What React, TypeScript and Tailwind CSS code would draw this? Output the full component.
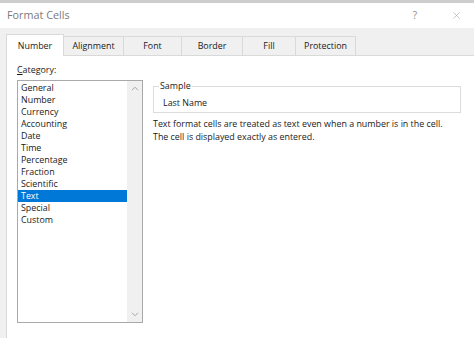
import { X } from "lucide-react";

const categories = [
  "General",
  "Number",
  "Currency",
  "Accounting",
  "Date",
  "Time",
  "Percentage",
  "Fraction",
  "Scientific",
  "Text",
  "Special",
  "Custom",
];

const tabs = [
  { label: "Number", w: "w-[58px]" },
  { label: "Alignment", w: "w-[60px]" },
  { label: "Font", w: "w-[58px]" },
  { label: "Border", w: "w-[61px]" },
  { label: "Fill", w: "w-[53px]" },
  { label: "Protection", w: "w-[60px]" },
];

const Chevron = ({ up }: { up?: boolean }) => (
  <svg width="8" height="5" viewBox="0 0 8 5" className={up ? "" : "rotate-180"}>
    <path d="M1 4.2 L4 1.2 L7 4.2" fill="none" stroke="#a6a6a6" strokeWidth="1" />
  </svg>
);

const App = () => {
  const selected = "Text";

  return (
    <div className="flex h-[338px] w-[474px] flex-col overflow-hidden bg-[#f0f0f0] font-['Open_Sans',sans-serif] text-[8.9px] text-[#1a1a1a]">
      <div className="h-[3px] shrink-0 bg-[#cdcdcd]" />

      {/* title bar */}
      <div className="flex h-[25px] shrink-0 items-center bg-white pl-[7px] pr-[12px]">
        <span className="text-[10.8px] text-[#7a7a7a]">Format Cells</span>
        <span className="ml-auto mr-[34px] text-[10px] text-[#8a8a8a]">?</span>
        <X size={11} strokeWidth={1} color="#8a8a8a" />
      </div>

      <div className="flex flex-1 flex-col pl-[6px] pt-[6px]">
        {/* tabs */}
        <div className="flex h-[21px] shrink-0 items-end">
          {tabs.map((t, i) =>
            i === 0 ? (
              <div
                key={t.label}
                className={`${t.w} relative z-10 -mb-px flex h-[22px] items-center justify-center border-x border-t border-[#d9d9d9] bg-white`}
              >
                {t.label}
              </div>
            ) : (
              <div
                key={t.label}
                className={`${t.w} flex h-[19px] items-center justify-center border-r border-t border-[#d9d9d9] bg-[#f0f0f0]`}
              >
                {t.label}
              </div>
            ),
          )}
        </div>

        {/* panel */}
        <div className="flex flex-1 gap-[10px] border-l border-t border-[#d9d9d9] bg-white pl-[10px] pt-[9px]">
          <div className="flex flex-col">
            <span className="h-[15px] leading-[10px]">
              <span className="underline decoration-[0.5px] underline-offset-[1px]">C</span>ategory:
            </span>
            <div className="flex h-[243px] w-[126px] border border-[#a9a9a9] bg-white">
              <ul className="flex-1 pt-px">
                {categories.map((c) => (
                  <li
                    key={c}
                    className={`flex h-[12px] items-center pl-[3px] ${
                      c === selected ? "bg-[#0078d7] text-white" : ""
                    }`}
                  >
                    {c}
                  </li>
                ))}
              </ul>
              <div className="flex w-[15px] flex-col items-center justify-between bg-[#f0f0f0] py-[5px]">
                <Chevron up />
                <Chevron />
              </div>
            </div>
          </div>

          <div className="flex w-[308px] flex-col pt-[16px]">
            <fieldset className="h-[32px] border border-[#dcdcdc] px-[9px]">
              <legend className="ml-[-4px] px-[1px] leading-[10px]">Sample</legend>
              <div className="pt-[6px] leading-[12px]">Last Name</div>
            </fieldset>
            <p className="mt-[4px] leading-[13px]">
              Text format cells are treated as text even when a number is in the cell.
              <br />
              The cell is displayed exactly as entered.
            </p>
          </div>
        </div>
      </div>
    </div>
  );
};

export default App;
